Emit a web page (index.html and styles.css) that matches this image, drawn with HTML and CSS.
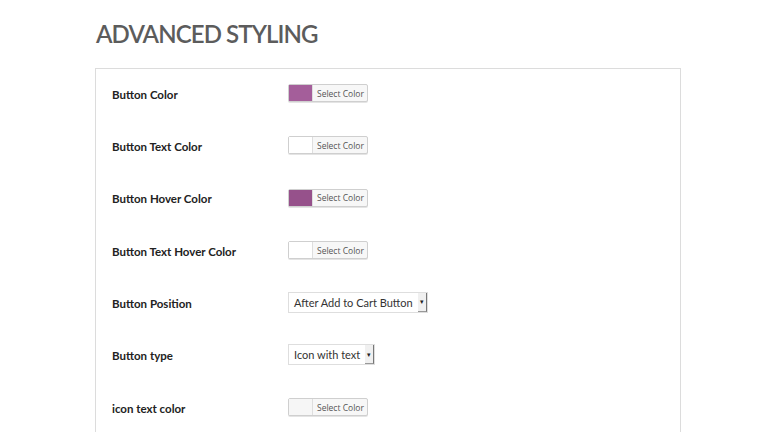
FILE: index.html
```html
<!DOCTYPE html>
<html lang="en">
<head>
    <meta charset="UTF-8">
    <meta name="viewport" content="width=device-width, initial-scale=1.0">
    <title>Advanced Styling</title>
    <link rel="stylesheet" href="styles.css">
</head>
<body>
    <div class="wrap">
        <h1>ADVANCED STYLING</h1>
        <div class="settings">
            <div class="row">
                <div class="label">Button Color</div>
                <div class="field">
                    <button class="picker"><span class="swatch swatch-purple"></span><span class="picker-text">Select Color</span></button>
                </div>
            </div>
            <div class="row">
                <div class="label">Button Text Color</div>
                <div class="field">
                    <button class="picker"><span class="swatch"></span><span class="picker-text">Select Color</span></button>
                </div>
            </div>
            <div class="row">
                <div class="label">Button Hover Color</div>
                <div class="field">
                    <button class="picker"><span class="swatch swatch-dark"></span><span class="picker-text">Select Color</span></button>
                </div>
            </div>
            <div class="row">
                <div class="label">Button Text Hover Color</div>
                <div class="field">
                    <button class="picker"><span class="swatch"></span><span class="picker-text">Select Color</span></button>
                </div>
            </div>
            <div class="row">
                <div class="label">Button Position</div>
                <div class="field">
                    <div class="select"><span class="select-text">After Add to Cart Button</span><span class="select-arrow">&#9662;</span></div>
                </div>
            </div>
            <div class="row">
                <div class="label">Button type</div>
                <div class="field">
                    <div class="select"><span class="select-text">Icon with text</span><span class="select-arrow">&#9662;</span></div>
                </div>
            </div>
            <div class="row">
                <div class="label">icon text color</div>
                <div class="field">
                    <button class="picker"><span class="swatch swatch-grey"></span><span class="picker-text">Select Color</span></button>
                </div>
            </div>
        </div>
    </div>
</body>
</html>
```

FILE: styles.css
```css
body {
    margin: 0;
    background-color: #fff;
    font-family: "Lato", "Open Sans", sans-serif;
    color: #333;
    overflow: hidden;
}

.wrap {
    padding: 0 0 0 95px;
    width: 586px;
}

h1 {
    margin: 0;
    padding: 19px 0 0 1px;
    height: 68px;
    box-sizing: border-box;
    font-size: 24px;
    line-height: 30px;
    font-weight: 600;
    letter-spacing: -0.9px;
    color: #5c5c5c;
}

.settings {
    border: 1px solid #dcdcdc;
    border-bottom: none;
    padding: 0 16px;
    height: 363px;
    overflow: hidden;
}

.row {
    display: flex;
    align-items: center;
    height: 52.33px;
}

.label {
    width: 176px;
    margin-top: -2px;
    font-size: 11.5px;
    font-weight: 700;
    color: #222;
}

.field {
    display: flex;
    align-items: center;
    margin-top: -4px;
}

.picker {
    display: flex;
    align-items: stretch;
    height: 18px;
    padding: 0;
    margin: 0;
    border: 1px solid #cfcfcf;
    border-radius: 2px;
    background-color: #f7f7f7;
    box-shadow: 0 1px 0 #e4e4e4;
    cursor: pointer;
}

.swatch {
    width: 23px;
    background-color: #fff;
    border-right: 1px solid #dedede;
}

.swatch-purple {
    background-color: #a45e9a;
}

.swatch-dark {
    background-color: #96518b;
}

.swatch-grey {
    background-color: #f6f6f6;
}

.picker-text {
    display: flex;
    align-items: center;
    padding: 0 3px 0 4px;
    font-family: "Open Sans", sans-serif;
    font-size: 8.5px;
    color: #555;
}

.select {
    display: flex;
    align-items: stretch;
    height: 21px;
    border: 1px solid #dedede;
    background-color: #fff;
    box-sizing: border-box;
}

.select-text {
    display: flex;
    align-items: center;
    padding: 0 5px;
    font-size: 11px;
    color: #333;
}

.select-arrow {
    display: flex;
    align-items: center;
    justify-content: center;
    width: 8px;
    font-size: 7px;
    color: #222;
    background-color: #f0f0f0;
    border-right: 1px solid #777;
    border-bottom: 1px solid #999;
}
```
